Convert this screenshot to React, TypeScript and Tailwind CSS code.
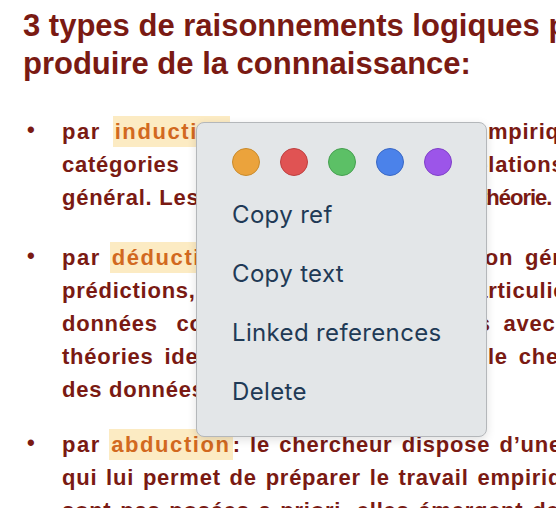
import React from "react";

const Hl = ({ children }: { children: React.ReactNode }) => (
  <span className="bg-[#fcebc3] text-[#d2691f] px-[2px] py-[3px] tracking-[1.6px]">{children}</span>
);

const Par = () => <span className="tracking-[1.5px]">par</span>;

const Bullet = () => (
  <span className="w-[39px] shrink-0 pl-[4px] -translate-y-[2px]">•</span>
);

export default function App() {
  return (
    <div className="relative w-[556px] h-[508px] overflow-hidden bg-white">
      <div className="w-[760px] pl-[23px] pt-[7px] font-['Liberation_Sans',Arial,Helvetica,sans-serif] font-bold text-[#7a1a13]">
        <h1 className="text-[31px] leading-[38px] font-bold">
          3 types de raisonnements logiques pour
          <br />
          produire de la connnaissance:
        </h1>

        <ul className="mt-[32px] text-[22px] leading-[33px] tracking-[0.75px] whitespace-nowrap">
          <li className="flex">
            <Bullet />
            <div className="flex flex-col">
              <div className="flex">
                <span className="w-[413px] shrink-0 [word-spacing:5px]">
                  <Par /> <Hl>induction</Hl>: le chercheur part
                </span>
                <span className="shrink-0">empirique pour construire des</span>
              </div>
              <div className="flex">
                <span className="w-[404px] shrink-0 [word-spacing:20px]">catégories et établit des</span>
                <span className="shrink-0">relations entre les</span>
              </div>
              <div className="flex">
                <span className="w-[418px] shrink-0">général. Les données fondent la</span>
                <span className="shrink-0 tracking-[-1px]">théorie.</span>
              </div>
            </div>
          </li>

          <li className="flex mt-[27px]">
            <Bullet />
            <div className="flex flex-col">
              <div className="flex">
                <span className="w-[322px] shrink-0 [word-spacing:2px]">
                  <Par /> <Hl>déduction</Hl>: à partir d’une
                </span>
                <span className="shrink-0 [word-spacing:5px]">proposition générale, le</span>
              </div>
              <div className="flex">
                <span className="w-[399px] shrink-0 [word-spacing:14px]">prédictions, puis les confronte</span>
                <span className="shrink-0">particulières des</span>
              </div>
              <div className="flex">
                <span className="w-[299px] shrink-0 [word-spacing:12px]">données collectées</span>
                <span className="shrink-0 [word-spacing:6px]">hypothèses avec les</span>
              </div>
              <div className="flex">
                <span className="w-[426px] shrink-0 [word-spacing:4px]">théories identifiées, et</span>
                <span className="shrink-0 [word-spacing:4px]">le chercheur</span>
              </div>
              <div>des données empiriques.</div>
            </div>
          </li>

          <li className="flex mt-[22px]">
            <Bullet />
            <div className="flex flex-col">
              <div>
                <span className="[word-spacing:1.5px]">
                  <Par /> <Hl>abduction</Hl>
                </span>
                <span className="[word-spacing:2.5px]">: le chercheur dispose d’une idée</span>
              </div>
              <div className="[word-spacing:2px]">
                qui lui permet de préparer le travail empirique. Les hypothèses ne
              </div>
              <div className="[word-spacing:2px]">
                sont pas posées a priori, elles émergent des données.
              </div>
            </div>
          </li>
        </ul>
      </div>

      <div className="absolute left-[196px] top-[122px] w-[291px] h-[315px] rounded-[8px] border border-[#b4b7ba] bg-[#e3e6e8] shadow-[0_3px_10px_rgba(0,0,0,0.12)] pl-[35px] pt-[25px] font-['Inter','Noto_Sans',sans-serif] text-[24px] tracking-[0.35px] text-[#1f3a56]">
        <div className="flex gap-[20px]">
          <span className="w-[28px] h-[28px] rounded-full bg-[#eba33c] border-[1.5px] border-[#c98b2c]" />
          <span className="w-[28px] h-[28px] rounded-full bg-[#e05353] border-[1.5px] border-[#be4040]" />
          <span className="w-[28px] h-[28px] rounded-full bg-[#5cc066] border-[1.5px] border-[#46a050]" />
          <span className="w-[28px] h-[28px] rounded-full bg-[#4b82ea] border-[1.5px] border-[#3a68c4]" />
          <span className="w-[28px] h-[28px] rounded-full bg-[#9c55e9] border-[1.5px] border-[#7f40c8]" />
        </div>
        <div className="mt-[9px] flex flex-col">
          <div className="py-[12px] leading-[35px]">Copy ref</div>
          <div className="py-[12px] leading-[35px]">Copy text</div>
          <div className="py-[12px] leading-[35px]">Linked references</div>
          <div className="py-[12px] leading-[35px]">Delete</div>
        </div>
      </div>
    </div>
  );
}
